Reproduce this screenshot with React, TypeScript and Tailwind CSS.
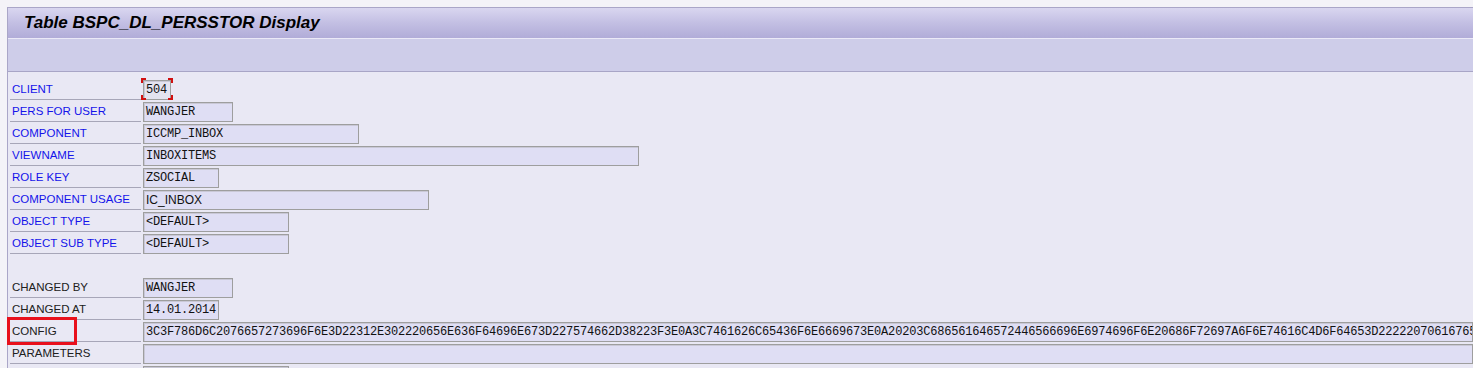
import React from "react";

type Row = {
  label?: string;
  value?: string;
  width?: string;
  key: boolean;
  sans?: boolean;
  grow?: boolean;
  focus?: boolean;
  boxed?: boolean;
  noLine?: boolean;
};

const CONFIG =
  "3C3F786D6C2076657273696F6E3D22312E302220656E636F64696E673D227574662D38223F3E0A3C7461626C65436F6E6669673E0A20203C686561646572446566696E6974696F6E20686F72697A6F6E74616C4D6F64653D2222207061676553697A653D223230223E0A";

const rows: Row[] = [
  { label: "CLIENT", value: "504", width: "w-[28px]", key: true, focus: true },
  { label: "PERS FOR USER", value: "WANGJER", width: "w-[90px]", key: true },
  { label: "COMPONENT", value: "ICCMP_INBOX", width: "w-[216px]", key: true },
  { label: "VIEWNAME", value: "INBOXITEMS", width: "w-[496px]", key: true },
  { label: "ROLE KEY", value: "ZSOCIAL", width: "w-[76px]", key: true },
  { label: "COMPONENT USAGE", value: "IC_INBOX", width: "w-[286px]", key: true, sans: true },
  { label: "OBJECT TYPE", value: "<DEFAULT>", width: "w-[146px]", key: true },
  { label: "OBJECT SUB TYPE", value: "<DEFAULT>", width: "w-[146px]", key: true },
  { key: false, noLine: true },
  { label: "CHANGED BY", value: "WANGJER", width: "w-[90px]", key: false },
  { label: "CHANGED AT", value: "14.01.2014", width: "w-[76px]", key: false },
  { label: "CONFIG", value: CONFIG, key: false, grow: true, boxed: true },
  { label: "PARAMETERS", value: "", key: false, grow: true },
  { label: "", value: "", width: "w-[146px]", key: false },
];

function Field({ r }: { r: Row }) {
  return (
    <div
      className={`relative ml-[2px] h-[20px] shrink-0 overflow-hidden whitespace-nowrap border border-[#9e9e9e] shadow-[inset_1px_1px_0_#c9c8d6] pl-[2px] flex items-center ${
        r.grow ? "flex-1 min-w-0" : r.width
      } ${r.focus ? "bg-[#e4e3ef]" : "bg-[#dfdef4]"}`}
    >
      <span
        className={
          r.sans
            ? "font-['Liberation_Sans'] text-[12px] text-[#111]"
            : "font-['Liberation_Mono'] text-[12px] tracking-[-0.2px] text-[#111]"
        }
      >
        {r.value}
      </span>
    </div>
  );
}

export default function App() {
  return (
    <div className="w-[1473px] h-[368px] overflow-hidden bg-[#f4f3f8] pt-[7px] pl-[7px] font-['Liberation_Sans']">
      <div className="h-[400px] flex flex-col border-l border-t border-[#aaa6c8] bg-[#e9e8f4]">
        <div className="h-[30px] shrink-0 bg-gradient-to-b from-[#d9d6f0] via-[#c3bfe3] to-[#b1acd8] flex items-center pl-[16px]">
          <span className="text-[17px] font-bold italic text-black">
            Table BSPC_DL_PERSSTOR Display
          </span>
        </div>
        <div className="h-[34px] shrink-0 border-t border-[#ebe9f7] border-b border-b-[#a8a5c6] bg-[#cecde9]" />
        <div className="pt-[6px] flex flex-col">
          {rows.map((r, i) => (
            <div key={i} className="relative h-[22px] flex items-end">
              <div
                className={`ml-[2px] w-[131px] h-full shrink-0 pl-[2px] pt-[3px] flex items-center text-[11.5px] ${
                  r.noLine ? "" : "border-b border-[#a7a6b8]"
                } ${r.key ? "text-[#1414ea]" : "text-[#202020]"}`}
              >
                {r.label}
              </div>
              {r.value !== undefined && <Field r={r} />}
              {r.focus && (
                <div className="absolute left-[133px] top-0 w-[32px] h-[22px] pointer-events-none">
                  <div className="absolute left-0 top-0 w-[5px] h-[2px] bg-[#d01010]" />
                  <div className="absolute left-0 top-0 w-[2px] h-[5px] bg-[#d01010]" />
                  <div className="absolute right-0 top-0 w-[5px] h-[2px] bg-[#d01010]" />
                  <div className="absolute right-0 top-0 w-[2px] h-[5px] bg-[#d01010]" />
                  <div className="absolute left-0 bottom-0 w-[5px] h-[2px] bg-[#d01010]" />
                  <div className="absolute left-0 bottom-0 w-[2px] h-[5px] bg-[#d01010]" />
                  <div className="absolute right-0 bottom-0 w-[5px] h-[2px] bg-[#d01010]" />
                  <div className="absolute right-0 bottom-0 w-[2px] h-[5px] bg-[#d01010]" />
                </div>
              )}
              {r.boxed && (
                <div className="absolute left-[-1px] top-[-3px] w-[70px] h-[28px] border-[3px] border-[#e8101c] pointer-events-none" />
              )}
            </div>
          ))}
        </div>
      </div>
    </div>
  );
}
